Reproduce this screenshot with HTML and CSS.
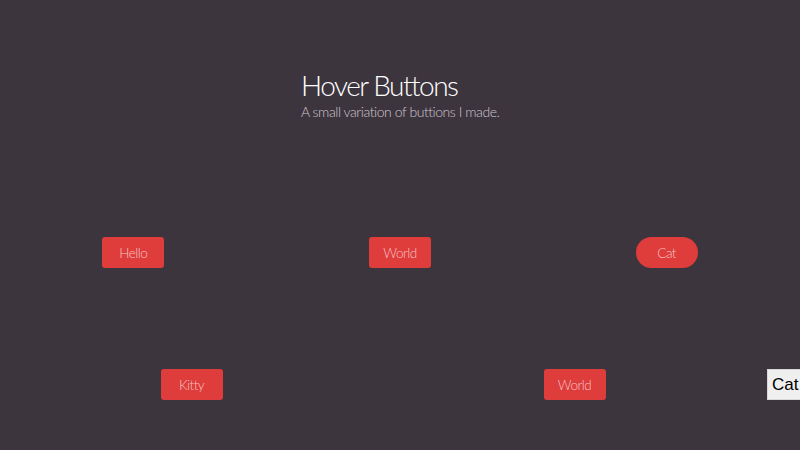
FILE: index.html
```html
<!DOCTYPE html>
<html lang="en">
<head>
<meta charset="utf-8">
<title>Hover Buttons</title>
<link rel="stylesheet" href="styles.css">
</head>
<body>
  <header class="intro">
    <h1 class="intro-title">Hover Buttons</h1>
    <p class="intro-sub">A small variation of buttions I made.</p>
  </header>

  <section class="row row-top">
    <div class="cell"><button class="btn">Hello</button></div>
    <div class="cell"><button class="btn">World</button></div>
    <div class="cell"><button class="btn btn-pill">Cat</button></div>
  </section>

  <section class="row row-bottom">
    <div class="cell wide"><button class="btn">Kitty</button></div>
    <div class="cell wide"><button class="btn">World</button></div>
    <div class="cell wide start"><button class="plain">Cat</button></div>
  </section>
</body>
</html>
```
FILE: styles.css
```css
html, body {
  margin: 0;
  height: 100%;
  overflow: hidden;
}

body {
  background: #3d353e;
  font-family: Lato, "Open Sans", sans-serif;
  font-weight: 300;
}

.intro {
  width: 198px;
  margin: 0 auto;
  padding-top: 68px;
  white-space: nowrap;
  color: #ffffff;
}

.intro-title {
  margin: 0;
  font-size: 28px;
  font-weight: 300;
  line-height: 35px;
  letter-spacing: -1.5px;
}

.intro-sub {
  margin: 0;
  font-size: 14px;
  line-height: 17px;
  letter-spacing: -0.45px;
  color: #cfc6cf;
}

.row {
  display: flex;
}

.row-top {
  margin-top: 117px;
}

.row-bottom {
  margin-top: 101px;
}

.cell {
  flex: 0 0 266.67px;
  display: flex;
  justify-content: center;
}

.cell.wide {
  flex-basis: 383px;
}

.cell.start {
  justify-content: flex-start;
  padding-left: 1px;
}

.btn {
  width: 62px;
  height: 31px;
  padding: 0;
  border: none;
  border-radius: 3px;
  background: #df3c3c;
  color: #f6c3c3;
  font-family: Lato, "Open Sans", sans-serif;
  font-weight: 300;
  font-size: 13.5px;
  letter-spacing: -0.5px;
}

.btn-pill {
  border-radius: 16px;
}

.plain {
  height: 31px;
  padding: 0 4px;
  border: 1px solid #d8d8d8;
  border-radius: 0;
  background: #efefef;
  color: #000;
  font-family: "Liberation Sans", Arial, sans-serif;
  font-weight: 400;
  font-size: 17px;
}
```
